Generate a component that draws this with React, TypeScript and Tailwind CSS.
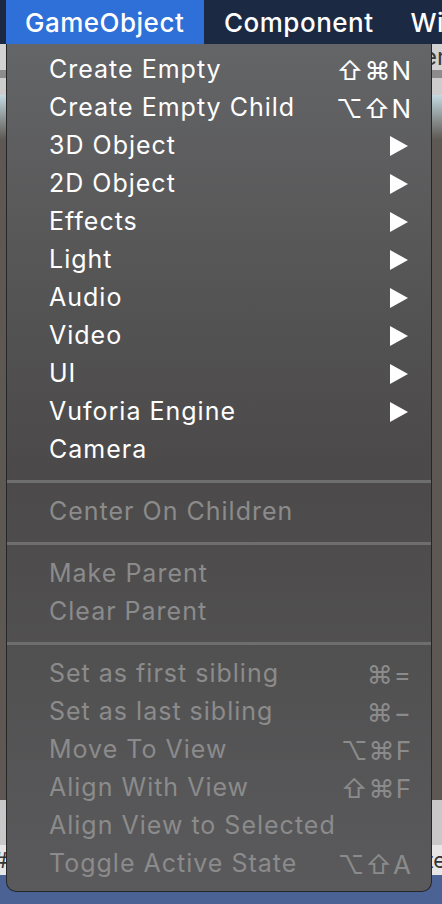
import React from "react";

type Item =
  | { kind: "item"; label: string; shortcut?: string; submenu?: boolean; disabled?: boolean }
  | { kind: "sep" };

const items: Item[] = [
  { kind: "item", label: "Create Empty", shortcut: "⇧⌘N" },
  { kind: "item", label: "Create Empty Child", shortcut: "⌥⇧N" },
  { kind: "item", label: "3D Object", submenu: true },
  { kind: "item", label: "2D Object", submenu: true },
  { kind: "item", label: "Effects", submenu: true },
  { kind: "item", label: "Light", submenu: true },
  { kind: "item", label: "Audio", submenu: true },
  { kind: "item", label: "Video", submenu: true },
  { kind: "item", label: "UI", submenu: true },
  { kind: "item", label: "Vuforia Engine", submenu: true },
  { kind: "item", label: "Camera" },
  { kind: "sep" },
  { kind: "item", label: "Center On Children", disabled: true },
  { kind: "sep" },
  { kind: "item", label: "Make Parent", disabled: true },
  { kind: "item", label: "Clear Parent", disabled: true },
  { kind: "sep" },
  { kind: "item", label: "Set as first sibling", shortcut: "⌘=", disabled: true },
  { kind: "item", label: "Set as last sibling", shortcut: "⌘−", disabled: true },
  { kind: "item", label: "Move To View", shortcut: "⌥⌘F", disabled: true },
  { kind: "item", label: "Align With View", shortcut: "⇧⌘F", disabled: true },
  { kind: "item", label: "Align View to Selected", disabled: true },
  { kind: "item", label: "Toggle Active State", shortcut: "⌥⇧A", disabled: true },
];

const font = { fontFamily: "Inter, 'DejaVu Sans', sans-serif" };

export default function App() {
  return (
    <div className="relative w-[442px] h-[904px] overflow-hidden bg-[#5d5853]" style={font}>
      {/* menu bar */}
      <div className="flex h-[44px] items-center overflow-hidden bg-[#1c2943] text-[26px] font-medium tracking-[0.5px] text-white">
        <div className="ml-[6px] flex h-full w-[198px] shrink-0 items-center bg-[#2e6fd8] pl-[19px]">GameObject</div>
        <div className="shrink-0 pl-[20px]">Component</div>
        <div className="shrink-0 pl-[37px] whitespace-nowrap">Window</div>
      </div>

      {/* scene behind the menu */}
      <div className="flex flex-col">
        <div className="flex h-[26px] items-center justify-end overflow-hidden bg-[#d2d2d2] text-[24px] text-[#3a3a3a]">
          <span className="-mr-[4px] leading-none">er</span>
        </div>
        <div className="h-[8px] bg-[#8c8c8c]" />
        <div className="h-[17px] bg-[#cdcdcd]" />
        <div className="h-[45px] bg-gradient-to-b from-[#c3dbe2] to-[#5d5853]" />
        <div className="h-[660px] bg-[#5d5853]" />
        <div className="h-[45px] bg-[#c8c8c8]" />
        <div className="flex h-[30px] items-center justify-between overflow-hidden bg-[#e6e6e6] text-[22px] text-[#333]">
          <span className="-ml-[6px]">#</span>
          <span className="-mr-[4px]">te</span>
        </div>
        <div className="h-[29px] bg-[#4a6394]" />
      </div>

      {/* dropdown */}
      <div className="absolute left-[6px] top-[44px] w-[426px] h-[848px] rounded-b-[10px] border border-t-0 border-[#262626] bg-gradient-to-b from-[#646567] via-[#4b4949] to-[#5a5a5c] pt-[7px]">
        {items.map((it, i) =>
          it.kind === "sep" ? (
            <div key={i} className="flex h-[24px] items-center">
              <div className="h-[3px] w-full bg-[#6e6e6e]" />
            </div>
          ) : (
            <div
              key={i}
              className={`flex h-[38px] items-center justify-between pl-[42px] pr-[19px] text-[25px] tracking-[1px] ${
                it.disabled ? "text-[#8b8b8b]" : "text-white"
              }`}
            >
              <span className="whitespace-nowrap">{it.label}</span>
              {it.shortcut && <span className="whitespace-nowrap text-[26px] tracking-[1px]">{it.shortcut}</span>}
              {it.submenu && (
                <svg width="18" height="20" viewBox="0 0 18 20" className="mr-[4px]">
                  <path d="M0 0 L18 10 L0 20 Z" fill="white" />
                </svg>
              )}
            </div>
          )
        )}
      </div>
    </div>
  );
}
